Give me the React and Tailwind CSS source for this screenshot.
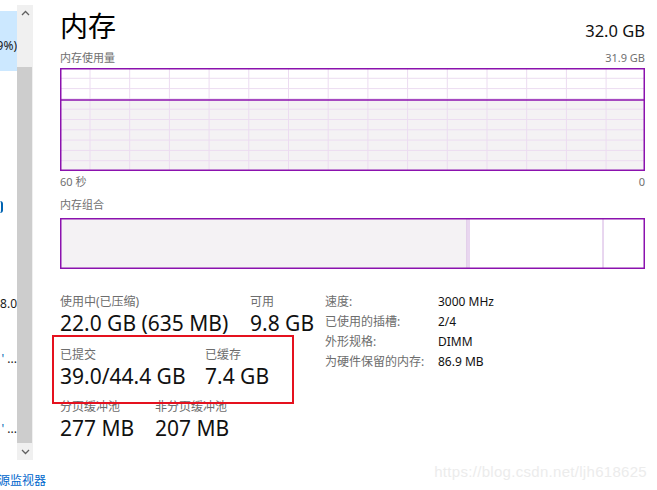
import React from 'react';

// 任务管理器 — 内存性能页
const FONT = "font-['Noto_Sans','Noto_Sans_CJK_SC',sans-serif]";

const vLines = Array.from({ length: 14 }, (_, i) => 30 + i * 39.7);
const hLines = Array.from({ length: 9 }, (_, i) => (i + 1) * 10.3);

function UsageChart() {
  return (
    <svg className="block w-[585px] h-[103px]" viewBox="0 0 585 103">
      <rect x="0" y="0" width="585" height="103" fill="#ffffff" />
      <rect x="0" y="32" width="585" height="71" fill="#f4f2f4" />
      {vLines.map((x) => (
        <line key={x} x1={x} y1="0" x2={x} y2="103" stroke="#ecdcf1" strokeWidth="1" />
      ))}
      {hLines.map((y) => (
        <line key={y} x1="0" y1={y} x2="585" y2={y} stroke="#ecdcf1" strokeWidth="1" />
      ))}
      <line x1="0" y1="32" x2="585" y2="32" stroke="#8b12ae" strokeWidth="1.5" />
      <rect x="0.75" y="0.75" width="583.5" height="101.5" fill="none" stroke="#8b12ae" strokeWidth="1.5" />
    </svg>
  );
}

function CompositionChart() {
  return (
    <svg className="block w-[585px] h-[51px]" viewBox="0 0 585 51">
      <rect x="0" y="0" width="585" height="51" fill="#ffffff" />
      <rect x="0" y="0" width="407" height="51" fill="#f4f2f4" />
      <line x1="407" y1="0" x2="407" y2="51" stroke="#d2aee0" strokeWidth="1" />
      <line x1="409" y1="0" x2="409" y2="51" stroke="#d2aee0" strokeWidth="1" />
      <line x1="543" y1="0" x2="543" y2="51" stroke="#d2aee0" strokeWidth="1" />
      <rect x="0.75" y="0.75" width="583.5" height="49.5" fill="none" stroke="#8b12ae" strokeWidth="1.5" />
    </svg>
  );
}

function Stat({ label, value, className = '' }) {
  return (
    <div className={`flex flex-col ${className}`}>
      <span className="text-[12px] leading-[14px] text-[#6d6d6d] whitespace-nowrap">{label}</span>
      <span className="text-[21px] leading-[28px] text-[#111] whitespace-nowrap">{value}</span>
    </div>
  );
}

const specs = [
  ['速度:', '3000 MHz'],
  ['已使用的插槽:', '2/4'],
  ['外形规格:', 'DIMM'],
  ['为硬件保留的内存:', '86.9 MB'],
];

function Ellipsis() {
  return (
    <span className="text-[12px] leading-[16px] whitespace-nowrap">
      <span className="text-[#0063b1]">'</span>
      <span className="text-[#1a1a1a]"> ...</span>
    </span>
  );
}

export default function App() {
  return (
    <div className={`relative w-[657px] h-[490px] overflow-hidden bg-white ${FONT}`}>
      <div className="flex h-[465px]">
        {/* 左侧列表（被裁切） */}
        <div className="w-[17px] shrink-0 overflow-hidden flex flex-col">
          <div className="mt-[11px] h-[60px] bg-[#cce8ff] flex items-start justify-end pt-[27px]">
            <span className="text-[12px] leading-[16px] text-[#1a1a1a] whitespace-nowrap">(39%)</span>
          </div>
          <div className="mt-[130px] h-[14px] flex justify-start">
            <div className="w-[3px] h-[12px] rounded-r-full border-r-[2px] border-[#0063b1]" />
          </div>
          <div className="mt-[81px] flex justify-end">
            <span className="text-[12px] leading-[16px] text-[#1a1a1a] whitespace-nowrap">48.0</span>
          </div>
          <div className="mt-[39px] flex justify-end">
            <Ellipsis />
          </div>
          <div className="mt-[54px] flex justify-end">
            <Ellipsis />
          </div>
        </div>

        {/* 滚动条 */}
        <div className="w-[16px] shrink-0 mt-[5px] h-[455px] bg-[#f0f0f0] flex flex-col items-stretch">
          <div className="h-[62px] flex justify-center pt-[5px]">
            <svg width="9" height="6" viewBox="0 0 9 6">
              <path d="M1 5 L4.5 1.5 L8 5" fill="none" stroke="#606060" strokeWidth="1.3" />
            </svg>
          </div>
          <div className="h-[376px] mr-[1px] bg-[#cdcdcd]" />
          <div className="flex-1 flex justify-center items-center">
            <svg width="9" height="6" viewBox="0 0 9 6">
              <path d="M1 1 L4.5 4.5 L8 1" fill="none" stroke="#606060" strokeWidth="1.3" />
            </svg>
          </div>
        </div>

        {/* 主内容 */}
        <div className="flex-1 pl-[27px] pr-[12px] flex flex-col">
          <div className="mt-[10px] flex justify-between items-baseline">
            <span className="text-[28px] leading-[32px] text-black">内存</span>
            <span className="text-[16.5px] leading-[20px] text-[#111]">32.0 GB</span>
          </div>
          <div className="mt-[9px] flex justify-between items-center text-[11px] leading-[14px] text-[#707070]">
            <span>内存使用量</span>
            <span>31.9 GB</span>
          </div>
          <div className="mt-[3px]">
            <UsageChart />
          </div>
          <div className="mt-[4px] flex justify-between text-[11px] leading-[14px] text-[#707070]">
            <span>60 秒</span>
            <span>0</span>
          </div>
          <div className="mt-[9px] text-[11px] leading-[14px] text-[#707070]">内存组合</div>
          <div className="mt-[6px]">
            <CompositionChart />
          </div>

          <div className="mt-[26px] flex">
            <div className="w-[265px] flex flex-col gap-[10.5px]">
              <div className="flex">
                <Stat className="w-[190px]" label="使用中(已压缩)" value="22.0 GB (635 MB)" />
                <Stat label="可用" value="9.8 GB" />
              </div>
              <div className="flex">
                <Stat className="w-[145px]" label="已提交" value="39.0/44.4 GB" />
                <Stat label="已缓存" value="7.4 GB" />
              </div>
              <div className="flex">
                <Stat className="w-[95px]" label="分页缓冲池" value="277 MB" />
                <Stat label="非分页缓冲池" value="207 MB" />
              </div>
            </div>
            <div className="grid grid-cols-[113px_auto] auto-rows-[20px] -mt-[3px] text-[12px] items-center">
              {specs.map(([k, v]) => (
                <React.Fragment key={k}>
                  <span className="text-[#6d6d6d] whitespace-nowrap">{k}</span>
                  <span className="text-[#111] whitespace-nowrap">{v}</span>
                </React.Fragment>
              ))}
            </div>
          </div>
        </div>
      </div>

      {/* 底部链接（被裁切） */}
      <div className="mt-[7px] w-[46px] overflow-hidden flex justify-end">
        <span className="text-[12px] leading-[18px] text-[#0066cc] whitespace-nowrap">打开资源监视器</span>
      </div>

      {/* 标注框 */}
      <div className="absolute left-[52px] top-[335px] w-[242px] h-[69px] border-2 border-[#e5111e]" />

      {/* 水印 */}
      <div className="absolute right-[10px] bottom-[10px] text-[15px] leading-[16px] tracking-[0.3px] text-[#ececec] font-['Liberation_Sans',Arial,sans-serif]">
        https://blog.csdn.net/ljh618625
      </div>
    </div>
  );
}
